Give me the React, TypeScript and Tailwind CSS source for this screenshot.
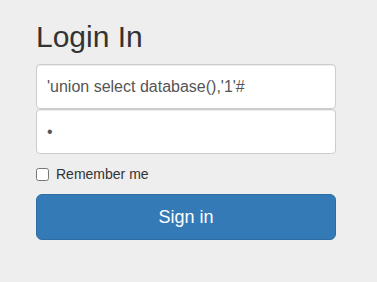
export default function App() {
  return (
    <div className="min-h-screen bg-[#eeeeee] font-['Liberation_Sans',Arial,sans-serif] text-[#333333]">
      <form className="ml-[36px] w-[300px] pt-[20px]" onSubmit={e => e.preventDefault()}>
        {/* Heading */}
        <h2 className="mb-[11px] h-[33px] text-[30px] leading-[33px] font-normal">Login In</h2>

        {/* Username / password */}
        <input
          type="text"
          readOnly
          value="'union select database(),'1'#"
          className="block h-[45px] w-full rounded-[4px] border border-[#cccccc] bg-white px-[10px] text-[16px] text-[#555555] shadow-[inset_0_1px_1px_rgba(0,0,0,0.075)] outline-none"
        />
        <input
          type="password"
          readOnly
          value="a"
          className="block h-[45px] w-full rounded-[4px] border border-[#cccccc] bg-white px-[10px] text-[16px] text-[#555555] shadow-[inset_0_1px_1px_rgba(0,0,0,0.075)] outline-none"
        />

        {/* Remember me */}
        <div className="my-[10px] flex h-[20px] items-start">
          <label className="flex items-start text-[14px] leading-[20px] font-normal">
            <input type="checkbox" className="m-0 mt-[4px] h-[13px] w-[13px]" />
            <span className="ml-[7px]">Remember me</span>
          </label>
        </div>

        {/* Submit */}
        <button
          type="submit"
          className="block h-[46px] w-full rounded-[6px] border border-[#2e6da4] bg-[#337ab7] text-[18px] leading-[24px] text-white"
        >
          Sign in
        </button>
      </form>
    </div>
  )
}
